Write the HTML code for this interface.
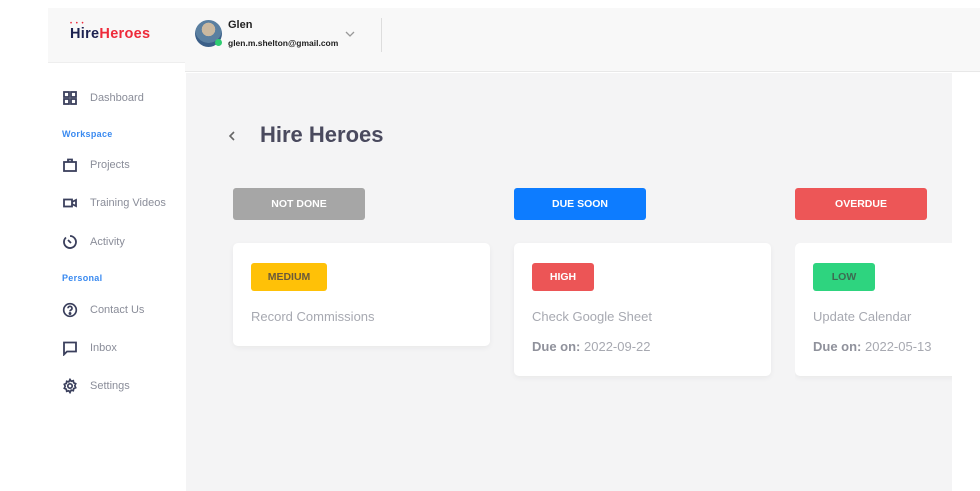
<!DOCTYPE html>
<html><head><meta charset="utf-8"><style>
*{margin:0;padding:0;box-sizing:border-box}
body{width:980px;height:491px;background:#fff;font-family:"Liberation Sans",sans-serif;position:relative;overflow:hidden}
.abs{position:absolute}
.hdr{left:48px;top:8px;width:932px;height:54px;background:#f8f8f8}
.hdr2{left:185px;top:62px;width:795px;height:10px;background:#f8f8f8;border-bottom:1px solid #e8e8e8}
.side{left:48px;top:62px;width:137px;height:429px;background:#fff;border-top:1px solid #eee}
.main{left:186px;top:73px;width:766px;height:418px;background:#f4f4f5}
.nav{position:absolute;left:62px;font-size:11px;color:#8a8d99;display:flex;align-items:center}
.nav svg{width:16px;height:16px;margin-right:12px}
.sec{position:absolute;left:62px;font-size:9px;font-weight:bold;color:#3a8af0;letter-spacing:.3px}
.col{position:absolute;top:188px;width:132px;height:32px;border-radius:3px;color:#fff;font-size:10.5px;font-weight:bold;text-align:center;line-height:32px}
.card{position:absolute;top:243px;width:257px;background:#fff;border-radius:5px;box-shadow:0 2px 6px rgba(0,0,0,.05);padding:20px 18px 22px}
.tag{display:inline-block;width:76px;height:28px;line-height:28px;text-align:center;border-radius:3px;font-size:10.5px;font-weight:bold}
.t{margin-top:18px;font-size:13px;color:#a7a9b1}
.d{margin-top:15px;font-size:13px;color:#a7a9b1}
.d b{color:#8f919b}
</style></head><body>
<div class="abs hdr"></div>
<div class="abs hdr2"></div>
<div class="abs side"></div>
<div class="abs main"></div>
<div class="abs" style="left:70px;top:26px;font-size:14.5px;font-weight:bold;letter-spacing:.3px"><span style="color:#1c2250">Hire</span><span style="color:#ee2a3a">Heroes</span></div>
<div class="abs" style="left:70px;top:21px;font-size:6px;color:#ee2a3a;letter-spacing:1px">• • •</div>
<div class="abs" style="left:195px;top:20px;width:27px;height:27px;border-radius:50%;background:radial-gradient(circle at 50% 35%,#c9b8a0 0 30%,#5a7fa0 31% 60%,#3b5f88 61%)"></div>
<div class="abs" style="left:215px;top:39px;width:7px;height:7px;border-radius:50%;background:#2ecc71"></div>
<div class="abs" style="left:228px;top:19px;font-size:11px;font-weight:bold;color:#222">Glen</div>
<div class="abs" style="left:228px;top:38px;font-size:8.5px;font-weight:bold;color:#222">glen.m.shelton@gmail.com</div>
<svg class="abs" style="left:345px;top:31px" width="10" height="7" viewBox="0 0 10 7"><path d="M1 1l4 4 4-4" stroke="#999" stroke-width="1.3" fill="none"/></svg>
<div class="abs" style="left:381px;top:18px;width:1px;height:34px;background:#ddd"></div>

<div class="nav" style="top:90px"><svg viewBox="0 0 16 16" fill="none" stroke="#3a3f5c" stroke-width="1.8"><rect x="2" y="2" width="5" height="5"/><rect x="9" y="2" width="5" height="5"/><rect x="2" y="9" width="5" height="5"/><rect x="9" y="9" width="5" height="5"/></svg>Dashboard</div>
<div class="sec" style="top:129px">Workspace</div>
<div class="nav" style="top:157px"><svg viewBox="0 0 16 16" fill="none" stroke="#3a3f5c" stroke-width="1.8"><rect x="2" y="5" width="12" height="9"/><path d="M6 5V2.5h4V5"/></svg>Projects</div>
<div class="nav" style="top:195px"><svg viewBox="0 0 16 16" fill="none" stroke="#3a3f5c" stroke-width="1.8"><rect x="2" y="4.5" width="8" height="7"/><path d="M10 7l4-2v6l-4-2"/></svg>Training Videos</div>
<div class="nav" style="top:234px"><svg viewBox="0 0 16 16" fill="none" stroke="#3a3f5c" stroke-width="1.8"><path d="M4 3.5A6 6 0 1 0 8 2"/><path d="M6 6l3 3"/></svg>Activity</div>
<div class="sec" style="top:273px">Personal</div>
<div class="nav" style="top:302px"><svg viewBox="0 0 16 16" fill="none" stroke="#3a3f5c" stroke-width="1.7"><circle cx="8" cy="8" r="6.3"/><path d="M6 6.3a2 2 0 1 1 2.6 1.9c-.5.2-.6.6-.6 1.2"/><circle cx="8" cy="11.5" r=".6" fill="#3a3f5c"/></svg>Contact Us</div>
<div class="nav" style="top:340px"><svg viewBox="0 0 16 16" fill="none" stroke="#3a3f5c" stroke-width="1.8"><path d="M2 2.5h12v9H5l-3 3z"/></svg>Inbox</div>
<div class="nav" style="top:378px"><svg viewBox="0 0 16 16" fill="none" stroke="#3a3f5c" stroke-width="1.7"><circle cx="8" cy="8" r="2.2"/><path d="M8 1.5l1.2 1.8 2.1-.6.4 2.1 2 .9-.9 2 .9 2-2 .9-.4 2.1-2.1-.6L8 14.5l-1.2-1.8-2.1.6-.4-2.1-2-.9.9-2-.9-2 2-.9.4-2.1 2.1.6z"/></svg>Settings</div>

<svg class="abs" style="left:228px;top:130px" width="8" height="12" viewBox="0 0 8 12"><path d="M6 2L2 6l4 4" stroke="#666" stroke-width="1.6" fill="none"/></svg>
<div class="abs" style="left:260px;top:122px;font-size:22px;font-weight:bold;color:#4a4a5e">Hire Heroes</div>

<div class="col" style="left:233px;background:#a6a6a6">NOT DONE</div>
<div class="col" style="left:514px;background:#0d7cff">DUE SOON</div>
<div class="col" style="left:795px;background:#ed5657">OVERDUE</div>

<div class="card" style="left:233px"><span class="tag" style="background:#ffc107;color:#6b5a3a">MEDIUM</span><div class="t">Record Commissions</div></div>
<div class="card" style="left:514px"><span class="tag" style="background:#ec5556;color:#fff;width:62px">HIGH</span><div class="t">Check Google Sheet</div><div class="d"><b>Due on:</b> 2022-09-22</div></div>
<div style="position:absolute;left:795px;top:243px;width:157px;height:140px;overflow:hidden">
<div class="card" style="left:0;top:0"><span class="tag" style="background:#2ed47f;color:#3c6b52;width:62px">LOW</span><div class="t">Update Calendar</div><div class="d"><b>Due on:</b> 2022-05-13</div></div>
</div>
</body></html>
